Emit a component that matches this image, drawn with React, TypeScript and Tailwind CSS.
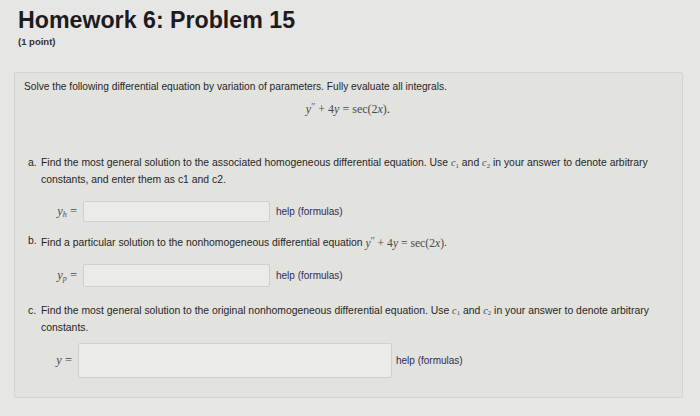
import React from 'react'

const sans = { fontFamily: '"Liberation Sans", Arial, sans-serif' }

function M({ children }: { children: React.ReactNode }) {
  return (
    <span className="text-[#4a4a4a]" style={{ fontFamily: '"Liberation Serif", "DejaVu Serif", serif' }}>
      {children}
    </span>
  )
}

function Eq() {
  return (
    <M>
      <i>y</i>
      <span className="text-[0.8em] align-[0.35em]">′′</span> + 4<i>y</i> = sec(2<i>x</i>)
    </M>
  )
}

function Sub({ children }: { children: React.ReactNode }) {
  return <sub className="text-[0.65em]">{children}</sub>
}

function AnswerRow({
  label,
  inputClass,
  rowClass,
}: {
  label: React.ReactNode
  inputClass: string
  rowClass: string
}) {
  return (
    <div className={`flex items-center ${rowClass}`}>
      <div className="w-[55px] text-right pr-[6px] text-[12.5px]">{label}</div>
      <div className={`bg-[#ebebea] border border-[#cfcfcd] rounded-[2px] ${inputClass}`} />
      <span className="ml-[6px] text-[10px] text-[#2e2e55]">help (formulas)</span>
    </div>
  )
}

export default function App() {
  return (
    <div className="w-[700px] h-[416px] bg-[#e6e6e4] text-[#262626] overflow-hidden" style={sans}>
      <div className="pl-[18px] pt-[6px]">
        <h1 className="text-[23.2px] font-bold leading-[28px] text-[#1e1b20]">Homework 6: Problem 15</h1>
        <p className="text-[9.5px] font-bold leading-[12px] mt-[2px] text-[#333]">(1 point)</p>
      </div>

      <div className="mx-[14px] w-[669px] mt-[24px] bg-[#e2e2df] border border-[#d4d4d1] rounded-[2px] pl-[9px] pt-[7px] h-[326px]">
        <p className="text-[10.2px] leading-[14px]">
          Solve the following differential equation by variation of parameters. Fully evaluate all integrals.
        </p>
        <div className="text-center text-[12px] mt-[6px] pr-[10px]">
          <Eq />.
        </div>

        <div className="mt-[36px] pl-[4px] text-[10.4px] leading-[17px]">
          <div className="flex">
            <span className="w-[13px]">a.</span>
            <span>
              Find the most general solution to the associated homogeneous differential equation. Use{' '}
              <M>
                <i>c</i>
                <Sub>1</Sub>
              </M>{' '}
              and{' '}
              <M>
                <i>c</i>
                <Sub>2</Sub>
              </M>{' '}
              in your answer to denote arbitrary
              <br />
              constants, and enter them as c1 and c2.
            </span>
          </div>

          <AnswerRow
            label={
              <M>
                <i>y</i>
                <Sub>
                  <i>h</i>
                </Sub>{' '}
                =
              </M>
            }
            rowClass="mt-[13px]"
            inputClass="w-[187px] h-[21px]"
          />

          <div className="flex mt-[10px]">
            <span className="w-[13px]">b.</span>
            <span>
              Find a particular solution to the nonhomogeneous differential equation{' '}
              <span className="text-[1.12em]">
                <Eq />
              </span>
              .
            </span>
          </div>

          <AnswerRow
            label={
              <M>
                <i>y</i>
                <Sub>
                  <i>p</i>
                </Sub>{' '}
                =
              </M>
            }
            rowClass="mt-[12px]"
            inputClass="w-[187px] h-[23px]"
          />

          <div className="flex mt-[15px]">
            <span className="w-[13px]">c.</span>
            <span>
              Find the most general solution to the original nonhomogeneous differential equation. Use{' '}
              <M>
                <i>c</i>
                <Sub>1</Sub>
              </M>{' '}
              and{' '}
              <M>
                <i>c</i>
                <Sub>2</Sub>
              </M>{' '}
              in your answer to denote arbitrary
              <br />
              constants.
            </span>
          </div>

          <div className="flex items-center mt-[7px]">
            <div className="w-[50px] text-right pr-[6px] text-[12.5px]">
              <M>
                <i>y</i> =
              </M>
            </div>
            <div className="bg-[#ebebea] border border-[#cfcfcd] rounded-[2px] w-[314px] h-[35px]" />
            <span className="ml-[4px] text-[10px] text-[#2e2e55]">help (formulas)</span>
          </div>
        </div>
      </div>
    </div>
  )
}
